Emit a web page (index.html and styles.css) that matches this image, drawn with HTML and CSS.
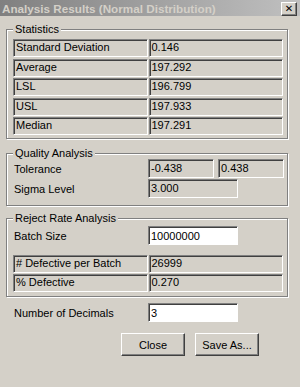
FILE: index.html
```html
<!DOCTYPE html>
<html lang="en">
<head>
    <meta charset="UTF-8">
    <title>Analysis Results (Normal Distribution)</title>
    <link rel="stylesheet" href="styles.css">
</head>
<body>
    <div class="window">
        <div class="titlebar">
            <span class="title">Analysis Results (Normal Distribution)</span>
            <button class="close" aria-label="Close">&#x2715;</button>
        </div>

        <div class="content">
            <fieldset class="group stats">
                <legend>Statistics</legend>
                <div class="table">
                    <div class="cell">Standard Deviation</div>
                    <div class="cell">0.146</div>
                    <div class="cell">Average</div>
                    <div class="cell">197.292</div>
                    <div class="cell">LSL</div>
                    <div class="cell">196.799</div>
                    <div class="cell">USL</div>
                    <div class="cell">197.933</div>
                    <div class="cell">Median</div>
                    <div class="cell">197.291</div>
                </div>
            </fieldset>

            <fieldset class="group quality">
                <legend>Quality Analysis</legend>
                <div class="field">
                    <span class="label">Tolerance</span>
                    <div class="pair">
                        <div class="box small">-0.438</div>
                        <div class="box small">0.438</div>
                    </div>
                </div>
                <div class="field">
                    <span class="label">Sigma Level</span>
                    <div class="box">3.000</div>
                </div>
            </fieldset>

            <fieldset class="group reject">
                <legend>Reject Rate Analysis</legend>
                <div class="field">
                    <span class="label">Batch Size</span>
                    <input class="input" type="text" value="10000000">
                </div>
                <div class="table tight">
                    <div class="cell">#&nbsp;Defective per Batch</div>
                    <div class="cell">26999</div>
                    <div class="cell">%&nbsp;Defective</div>
                    <div class="cell">0.270</div>
                </div>
            </fieldset>

            <div class="field decimals">
                <span class="label">Number of Decimals</span>
                <input class="input" type="text" value="3">
            </div>

            <div class="buttons">
                <button class="btn">Close</button>
                <button class="btn">Save As...</button>
            </div>
        </div>
    </div>
</body>
</html>
```

FILE: styles.css
```css
* {
    margin: 0;
    padding: 0;
    box-sizing: border-box;
}

body {
    background: #d4d0c8;
    font-family: "Liberation Sans", Arial, sans-serif;
    font-size: 11px;
    color: #000;
}

.window {
    width: 300px;
    height: 387px;
    background: #d4d0c8;
}

.titlebar {
    height: 16px;
    display: flex;
    align-items: center;
    justify-content: space-between;
    padding: 0 3px 0 2px;
    background: linear-gradient(to right, #808080, #c0c0c0);
}

.title {
    font-weight: bold;
    font-size: 11.7px;
    color: #d4d0c8;
    white-space: nowrap;
}

.close {
    width: 16px;
    height: 14px;
    margin-top: 1px;
    background: #d4d0c8;
    border: 1px solid;
    border-color: #fff #404040 #404040 #fff;
    box-shadow: inset -1px -1px 0 #808080;
    font-family: "DejaVu Sans", sans-serif;
    font-size: 10px;
    font-weight: bold;
    line-height: 10px;
    color: #000;
}

.content {
    padding: 0 0 0 6px;
}

/* etched group box */
.group {
    width: 282px;
    border: 1px solid #808080;
    box-shadow: 1px 1px 0 #fff, inset 1px 1px 0 #fff;
    padding: 0 4px 3px 6px;
    min-width: 0;
}

.group legend {
    padding: 0 2px;
    line-height: 12px;
    background: #d4d0c8;
}

.stats {
    margin-top: 7px;
    padding-top: 4px;
}

.quality {
    margin-top: 8px;
    padding-bottom: 6px;
}

.reject {
    margin-top: 6px;
    padding-top: 2px;
    padding-bottom: 4px;
}

.table {
    display: grid;
    grid-template-columns: 1fr 1fr;
    column-gap: 1px;
    row-gap: 1.5px;
}

.table.tight {
    margin-top: 10px;
    row-gap: 1px;
}

.cell {
    height: 18px;
    line-height: 15px;
    padding-left: 2px;
    border: 1px solid;
    border-color: #808080 #fff #fff #808080;
    box-shadow: inset 1px 1px 0 #404040;
    white-space: nowrap;
}

.field {
    display: grid;
    grid-template-columns: 135px auto;
    align-items: center;
    margin-bottom: 1px;
}

.label {
    padding-left: 1px;
}

.pair {
    display: flex;
    gap: 4px;
}

.box {
    width: 90px;
    height: 19px;
    line-height: 16px;
    padding-left: 2px;
    border: 1px solid;
    border-color: #808080 #fff #fff #808080;
    box-shadow: inset 1px 1px 0 #404040;
}

.box.small {
    width: 66px;
}

.input {
    width: 90px;
    height: 19px;
    padding-left: 2px;
    font: inherit;
    color: #000;
    background: #fff;
    border: 1px solid;
    border-color: #808080 #fff #fff #808080;
    box-shadow: inset 1px 1px 0 #404040;
    outline: 0;
}

.decimals {
    width: 282px;
    margin-top: 6px;
    padding-left: 7px;
    grid-template-columns: 135px auto;
}

.buttons {
    display: flex;
    gap: 10px;
    margin-top: 11px;
    padding-left: 115px;
}

.btn {
    width: 64px;
    height: 23px;
    font: inherit;
    color: #000;
    background: #d4d0c8;
    border: 1px solid;
    border-color: #fff #404040 #404040 #fff;
    box-shadow: inset -1px -1px 0 #808080;
}
```
